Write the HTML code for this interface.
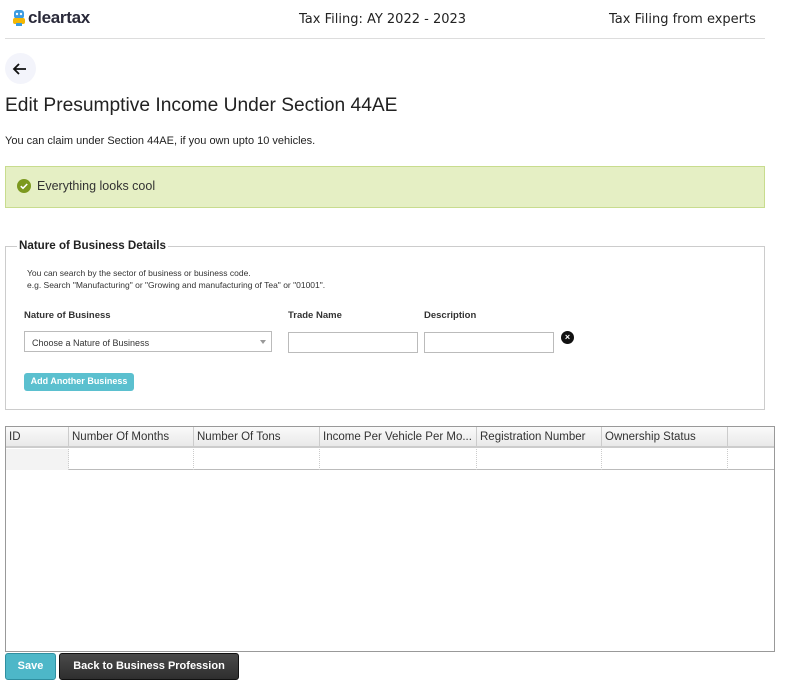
<!DOCTYPE html>
<html><head><meta charset="utf-8"><style>
*{box-sizing:border-box;margin:0;padding:0}
body{width:785px;height:685px;background:#fff;font-family:"Liberation Sans",Arial,sans-serif;color:#222;position:relative;overflow:hidden}
.a{position:absolute}
.hd{font-family:"DejaVu Sans",sans-serif;font-size:13px;color:#222}
.lbl{font-size:9.5px;font-weight:bold;color:#333}
.inp{border:1px solid #bbb;background:#fff;height:21px}
.th{position:absolute;top:0;height:21px;line-height:21px;font-size:11.5px;color:#333;padding-left:3px;border-right:1px solid #ccc;white-space:nowrap;overflow:hidden}
.td{position:absolute;top:0;height:21px;border-right:1px dotted #ccc}
</style></head><body>
<svg class="a" style="left:12px;top:10px" width="14" height="16" viewBox="0 0 14 16">
<rect x="2" y="0" width="10" height="9" rx="3" fill="#3b9be0"/>
<circle cx="5" cy="4" r="1.2" fill="#fff"/><circle cx="9" cy="4" r="1.2" fill="#fff"/>
<rect x="1" y="8" width="12" height="6" rx="2" fill="#f2b705"/>
<rect x="4" y="13" width="6" height="3" fill="#3b9be0"/></svg>
<div class="a" style="left:28px;top:8px;font-size:17px;font-weight:bold;color:#2a2a3a;letter-spacing:-0.3px">cleartax</div>
<div class="a hd" style="left:299px;top:12px">Tax Filing: AY 2022 - 2023</div>
<div class="a hd" style="left:609px;top:12px">Tax Filing from experts</div>
<div class="a" style="left:5px;top:38px;width:760px;height:1px;background:#ddd"></div>
<div class="a" style="left:5px;top:53px;width:31px;height:31px;border-radius:50%;background:#f3f4fb"></div>
<svg class="a" style="left:12px;top:61px" width="16" height="16" viewBox="0 0 16 16"><path d="M14 8H2M7 3L2 8l5 5" stroke="#111" stroke-width="1.8" fill="none"/></svg>
<div class="a" style="left:5px;top:95px;font-size:19.2px;color:#222">Edit Presumptive Income Under Section 44AE</div>
<div class="a" style="left:5px;top:135px;font-size:11px;color:#222">You can claim under Section 44AE, if you own upto 10 vehicles.</div>
<div class="a" style="left:5px;top:166px;width:760px;height:42px;background:#e5efc4;border:1px solid #c8dc8e"></div>
<svg class="a" style="left:17px;top:179px" width="14" height="14" viewBox="0 0 14 14"><circle cx="7" cy="7" r="7" fill="#7c991f"/><path d="M3.8 7.2l2.2 2.1 4.2-4.3" stroke="#fff" stroke-width="1.6" fill="none"/></svg>
<div class="a" style="left:37px;top:179px;font-size:12.5px;color:#333">Everything looks cool</div>
<div class="a" style="left:5px;top:246px;width:760px;height:164px;border:1px solid #ccc"></div>
<div class="a" style="left:17px;top:239px;padding:0 2px;background:#fff;font-size:11.6px;font-weight:bold;color:#222">Nature of Business Details</div>
<div class="a" style="left:27px;top:267px;font-size:8.5px;line-height:12px;color:#333">You can search by the sector of business or business code.<br>e.g. Search "Manufacturing" or "Growing and manufacturing of Tea" or "01001".</div>
<div class="a lbl" style="left:24px;top:310px">Nature of Business</div>
<div class="a lbl" style="left:288px;top:310px">Trade Name</div>
<div class="a lbl" style="left:424px;top:310px">Description</div>
<div class="a inp" style="left:24px;top:331px;width:248px;font-size:9px;color:#333;padding:6px 0 0 7px">Choose a Nature of Business</div>
<div class="a" style="left:260px;top:340px;border:3px solid transparent;border-top:4px solid #999"></div>
<div class="a inp" style="left:288px;top:332px;width:130px"></div>
<div class="a inp" style="left:424px;top:332px;width:130px"></div>
<div class="a" style="left:561px;top:331px;width:13px;height:13px;border-radius:50%;background:#111;color:#fff;font-size:9px;font-weight:bold;text-align:center;line-height:13px">×</div>
<div class="a" style="left:24px;top:373px;width:110px;height:18px;border-radius:3px;background:#5bc0cf;color:#fff;font-size:9px;font-weight:bold;text-align:center;line-height:17px">Add Another Business</div>
<div class="a" style="left:5px;top:426px;width:770px;height:226px;border:1px solid #999"></div>
<div class="a" style="left:6px;top:427px;width:768px;height:21px;background:linear-gradient(#fafafa,#e9e9e9);border-bottom:2px solid #ccc">
<div class="th" style="left:0;width:63px">ID</div>
<div class="th" style="left:63px;width:125px">Number Of Months</div>
<div class="th" style="left:188px;width:126px">Number Of Tons</div>
<div class="th" style="left:314px;width:157px">Income Per Vehicle Per Mo...</div>
<div class="th" style="left:471px;width:125px">Registration Number</div>
<div class="th" style="left:596px;width:126px">Ownership Status</div>
</div>
<div class="a" style="left:6px;top:449px;width:768px;height:21px;border-bottom:1px solid #bbb">
<div class="td" style="left:0;width:63px;background:#f3f3f3"></div>
<div class="td" style="left:63px;width:125px"></div>
<div class="td" style="left:188px;width:126px"></div>
<div class="td" style="left:314px;width:157px"></div>
<div class="td" style="left:471px;width:125px"></div>
<div class="td" style="left:596px;width:126px"></div>
</div>
<div class="a" style="left:5px;top:653px;width:51px;height:27px;border-radius:3px;background:#4db7c8;border:1px solid #2f8fa0;color:#fff;font-size:11px;font-weight:bold;text-align:center;line-height:25px">Save</div>
<div class="a" style="left:59px;top:653px;width:180px;height:27px;border-radius:3px;background:linear-gradient(#4a4a4a,#2e2e2e);border:1px solid #111;color:#fff;font-size:11px;font-weight:bold;text-align:center;line-height:25px">Back to Business Profession</div>
</body></html>
